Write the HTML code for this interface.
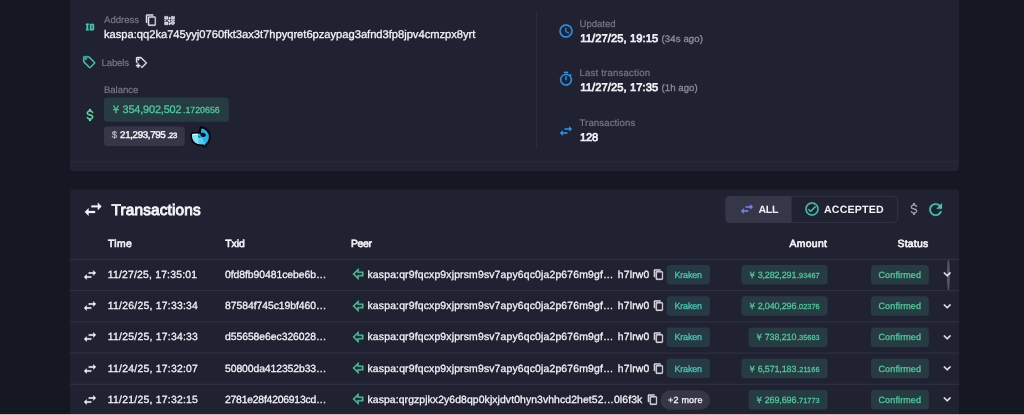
<!DOCTYPE html>
<html lang="en"><head><meta charset="utf-8"><title>Kaspa address</title>
<style>
*{box-sizing:border-box;margin:0;padding:0}
html,body{width:1024px;height:415px;overflow:hidden;background:#151723;font-family:"Liberation Sans",sans-serif;color:#f1f1f6}
div,svg{position:absolute}
svg{overflow:visible}
.t{text-rendering:geometricPrecision;white-space:nowrap;line-height:14px;-webkit-text-stroke:.3px}
#root{left:0;top:0;width:1024px;height:415px;will-change:transform}

</style></head><body>
<div id="root">
<svg style="left:0;top:0" width="1024" height="415" viewBox="0 0 1024 415"><rect x="70.00" y="-10.00" width="889.00" height="181.00" rx="4" fill="#202231"/><path d="M70 161H959V167A4 4 0 0 1 955 171H74A4 4 0 0 1 70 167Z" fill="#222433"/><rect x="70.00" y="160.80" width="889.00" height="1.00" rx="0" fill="#292b3b"/><rect x="70.00" y="189.60" width="889.00" height="240.00" rx="4" fill="#202231"/><rect x="536.00" y="12.00" width="1.00" height="137.00" rx="0" fill="#2a2c3b"/><rect x="104.00" y="97.40" width="124.80" height="24.40" rx="3.5" fill="#273b43"/><rect x="104.00" y="126.40" width="80.80" height="19.50" rx="3.5" fill="#353747"/><rect x="726" y="196.4" width="171.7" height="26" rx="3.5" fill="none" stroke="#323444" stroke-width="1"/><path d="M729.5 195.9H791.6V222.9H729.5A4 4 0 0 1 725.5 218.9V199.9A4 4 0 0 1 729.5 195.9Z" fill="#353748"/><ellipse cx="948.4" cy="274.8" rx="1.5" ry="15.4" fill="rgba(225,225,240,.27)"/><rect x="70.00" y="258.97" width="889.00" height="1.00" rx="0" fill="#323443"/><rect x="666.75" y="265.00" width="43.25" height="19.50" rx="3.5" fill="#263a45"/><rect x="741.50" y="265.00" width="86.10" height="19.60" rx="3.5" fill="#273b43"/><rect x="871.00" y="265.00" width="57.80" height="19.60" rx="3.5" fill="#273b43"/><rect x="70.00" y="290.17" width="889.00" height="1.00" rx="0" fill="#323443"/><rect x="666.75" y="296.20" width="43.25" height="19.50" rx="3.5" fill="#263a45"/><rect x="741.50" y="296.20" width="86.10" height="19.60" rx="3.5" fill="#273b43"/><rect x="871.00" y="296.20" width="57.80" height="19.60" rx="3.5" fill="#273b43"/><rect x="70.00" y="321.37" width="889.00" height="1.00" rx="0" fill="#323443"/><rect x="666.75" y="327.40" width="43.25" height="19.50" rx="3.5" fill="#263a45"/><rect x="748.50" y="327.40" width="79.10" height="19.60" rx="3.5" fill="#273b43"/><rect x="871.00" y="327.40" width="57.80" height="19.60" rx="3.5" fill="#273b43"/><rect x="70.00" y="352.57" width="889.00" height="1.00" rx="0" fill="#323443"/><rect x="666.75" y="358.60" width="43.25" height="19.50" rx="3.5" fill="#263a45"/><rect x="741.50" y="358.60" width="86.10" height="19.60" rx="3.5" fill="#273b43"/><rect x="871.00" y="358.60" width="57.80" height="19.60" rx="3.5" fill="#273b43"/><rect x="70.00" y="383.77" width="889.00" height="1.00" rx="0" fill="#323443"/><rect x="660.50" y="390.30" width="49.50" height="19.50" rx="9.75" fill="#353747"/><rect x="748.50" y="389.80" width="79.10" height="19.60" rx="3.5" fill="#273b43"/><rect x="871.00" y="389.80" width="57.80" height="19.60" rx="3.5" fill="#273b43"/><rect x="0.00" y="414.00" width="1024.00" height="1.00" rx="0" fill="#c9bdbd"/></svg>
<svg style="left:81.90px;top:19.10px" width="16" height="16" viewBox="0 0 24 24"><path fill="#45c6b1" stroke="#45c6b1" stroke-width="0.7" stroke-linejoin="round" d="M10 7V9H9V15H10V17H6V15H7V9H6V7H10M16 7C17.11 7 18 7.9 18 9V15C18 16.11 17.11 17 16 17H12V7M16 9H14V15H16V9Z"/></svg>
<svg style="left:145.35px;top:14.05px" width="12.2" height="12.2" viewBox="0 0 24 24"><path fill="#e4e4ec" stroke="#e4e4ec" stroke-width="0.9" stroke-linejoin="round" d="M19,21H8V7H19M19,5H8A2,2 0 0,0 6,7V21A2,2 0 0,0 8,23H19A2,2 0 0,0 21,21V7A2,2 0 0,0 19,5M16,1H4A2,2 0 0,0 2,3V17H4V3H16V1Z"/></svg>
<svg style="left:162.55px;top:14.6px" width="13.1" height="11.2" viewBox="0 0 24 24" preserveAspectRatio="none"><path fill="#e4e4ec" stroke="#e4e4ec" stroke-width="1.1" d="M3,11H5V13H3V11M11,5H13V9H11V5M9,11H13V15H11V13H9V11M15,11H17V13H19V11H21V13H19V15H21V19H19V21H17V19H13V21H11V17H15V15H17V13H15V11M19,19V15H17V19H19M15,3H21V9H15V3M17,5V7H19V5H17M3,3H9V9H3V3M5,5V7H7V5H5M3,15H9V21H3V15M5,17V19H7V17H5Z"/></svg>
<svg style="left:81.55px;top:55.30px" width="14.4" height="14.4" viewBox="0 0 24 24"><path fill="#45c6b1" stroke="#45c6b1" stroke-width="0.6" stroke-linejoin="round" d="M21.41 11.58L12.41 2.58A2 2 0 0 0 11 2H4A2 2 0 0 0 2 4V11A2 2 0 0 0 2.59 12.42L11.59 21.42A2 2 0 0 0 13 22A2 2 0 0 0 14.41 21.41L21.41 14.41A2 2 0 0 0 22 13A2 2 0 0 0 21.41 11.58M13 20L4 11V4H11L20 13M6.5 5A1.5 1.5 0 1 1 5 6.5A1.5 1.5 0 0 1 6.5 5Z"/></svg>
<svg style="left:135.10px;top:55.85px" width="12.8" height="12.8" viewBox="0 0 24 24"><path fill="#e8e8ee" stroke="#e8e8ee" stroke-width="0.8" stroke-linejoin="round" d="M21.41 11.58L12.41 2.58A2 2 0 0 0 11 2H4A2 2 0 0 0 2 4V11A2 2 0 0 0 2.59 12.42L3 12.82A5.62 5.62 0 0 1 5.08 12.08L4 11V4H11L20 13L13 20L11.92 18.92A5.57 5.57 0 0 1 11.18 21L11.59 21.41A2 2 0 0 0 13 22A2 2 0 0 0 14.41 21.41L21.41 14.41A2 2 0 0 0 22 13A2 2 0 0 0 21.41 11.58M6.5 5A1.5 1.5 0 1 0 8 6.5A1.5 1.5 0 0 0 6.5 5M10 19H7V22H5V19H2V17H5V14H7V17H10Z"/></svg>
<svg style="left:82.10px;top:107.40px" width="16" height="16" viewBox="0 0 24 24"><path fill="#5fd8a0" stroke="#5fd8a0" stroke-width="0.3" stroke-linejoin="round" d="M7,15H9C9,16.08 10.37,17 12,17C13.63,17 15,16.08 15,15C15,13.9 13.96,13.5 11.76,12.97C9.64,12.44 7,11.78 7,9C7,7.21 8.47,5.69 10.5,5.18V3H13.5V5.18C15.53,5.69 17,7.21 17,9H15C15,7.92 13.63,7 12,7C10.37,7 9,7.92 9,9C9,10.1 10.04,10.5 12.24,11.03C14.36,11.56 17,12.22 17,15C17,16.79 15.53,18.31 13.5,18.82V21H10.5V18.82C8.47,18.31 7,16.79 7,15Z"/></svg>
<svg style="left:557.60px;top:22.60px" width="16" height="16" viewBox="0 0 24 24"><path fill="#2b98f0" stroke="#2b98f0" stroke-width="0.3" stroke-linejoin="round" d="M12,20A8,8 0 0,0 20,12A8,8 0 0,0 12,4A8,8 0 0,0 4,12A8,8 0 0,0 12,20M12,2A10,10 0 0,1 22,12A10,10 0 0,1 12,22C6.47,22 2,17.5 2,12A10,10 0 0,1 12,2M12.5,7V12.25L17,14.92L16.25,16.15L11,13V7H12.5Z"/></svg>
<svg style="left:557.75px;top:71.30px" width="16" height="16" viewBox="0 0 24 24"><path fill="#2b98f0" stroke="#2b98f0" stroke-width="0.3" stroke-linejoin="round" d="M12,20A7,7 0 0,1 5,13A7,7 0 0,1 12,6A7,7 0 0,1 19,13A7,7 0 0,1 12,20M19.03,7.39L20.45,5.97C20,5.46 19.55,5 19.04,4.56L17.62,6C16.07,4.74 14.12,4 12,4A9,9 0 0,0 3,13A9,9 0 0,0 12,22C17,22 21,17.97 21,13C21,10.88 20.26,8.93 19.03,7.39M11,14H13V8H11M15,1H9V3H15V1Z"/></svg>
<svg style="left:558.00px;top:122.50px" width="16" height="16" viewBox="0 0 24 24"><path fill="#2b98f0" stroke="#2b98f0" stroke-width="0.3" stroke-linejoin="round" d="M21,9L17,5V8H10V10H17V13M7,11L3,15L7,19V16H14V14H7V11Z"/></svg>
<svg style="left:186px;top:122px" width="30" height="28" viewBox="0 0 30 28">
<path d="M5.3 14C5.2 12.2 5.7 11 7.1 10.9L12.5 10.8L14.1 8.6L14.7 5.3C17.2 5.5 19.4 6.4 21.2 8.2C23.2 10.2 24 12.6 23.9 15C23.8 18.4 22.2 21 19.8 22.9L19.4 24.6L17.5 24.3L16.6 23C13.4 23.3 10.4 22.7 8.2 20.9C6.2 19.1 5.4 16.6 5.3 14Z" fill="#20b4ec" stroke="#04050a" stroke-width="2" stroke-linejoin="round"/>
<path d="M6 13.7C6 12.3 6.4 11.7 7.3 11.7L12.1 11.6L12.1 14.4C12.3 15.8 13.5 16.3 15.1 16.3L16.6 16.3C16.6 18.4 17.2 20.2 18.8 21.5C17.2 22.4 14.1 22.6 11.7 21.8C8.3 20.6 6.1 17.5 6 13.7Z" fill="#82e3fb"/>
<path d="M12.4 17L17 16.8L17.6 20.3L18.9 21.7C16.7 22.6 14.3 22.4 12.4 21.6Z" fill="#4fccf4"/>
<path d="M6.4 12.2L11.5 12L11.6 13L6.3 13.2Z" fill="#e4f8fd"/>
<path d="M12.4 10.6L14.3 7.6L15.2 11C16.8 10.4 19.6 11 19.8 12.9C20 14.9 16.8 15.3 15.4 14.5C14.3 13.8 14.6 12.3 14.1 11.6L12.4 11.4Z" fill="#080a12"/>
<rect x="12.3" y="14.2" width="1.6" height="1.6" fill="#1c6f8e"/>
</svg>
<svg style="left:82.05px;top:198.30px" width="22.4" height="22.4" viewBox="0 0 24 24"><path fill="#f1f1f6" stroke="#f1f1f6" stroke-width="0.3" stroke-linejoin="round" d="M21,9L17,5V8H10V10H17V13M7,11L3,15L7,19V16H14V14H7V11Z"/></svg>
<svg style="left:738.50px;top:201.00px" width="16" height="16" viewBox="0 0 24 24"><path fill="#7b83eb" stroke="#7b83eb" stroke-width="0.3" stroke-linejoin="round" d="M21,9L17,5V8H10V10H17V13M7,11L3,15L7,19V16H14V14H7V11Z"/></svg>
<svg style="left:803.75px;top:200.75px" width="16" height="16" viewBox="0 0 24 24"><path fill="#45c6b1" stroke="#45c6b1" stroke-width="0.3" stroke-linejoin="round" d="M12 2C6.5 2 2 6.5 2 12S6.5 22 12 22 22 17.5 22 12 17.5 2 12 2M12 20C7.59 20 4 16.41 4 12S7.59 4 12 4 20 7.59 20 12 16.41 20 12 20M16.59 7.58L10 14.17L7.41 11.59L6 13L10 17L18 9L16.59 7.58Z"/></svg>
<svg style="left:906.25px;top:201.00px" width="16" height="16" viewBox="0 0 24 24"><path fill="#9a9ca8" stroke="#9a9ca8" stroke-width="0" stroke-linejoin="round" d="M7,15H9C9,16.08 10.37,17 12,17C13.63,17 15,16.08 15,15C15,13.9 13.96,13.5 11.76,12.97C9.64,12.44 7,11.78 7,9C7,7.21 8.47,5.69 10.5,5.18V3H13.5V5.18C15.53,5.69 17,7.21 17,9H15C15,7.92 13.63,7 12,7C10.37,7 9,7.92 9,9C9,10.1 10.04,10.5 12.24,11.03C14.36,11.56 17,12.22 17,15C17,16.79 15.53,18.31 13.5,18.82V21H10.5V18.82C8.47,18.31 7,16.79 7,15Z"/></svg>
<svg style="left:926.40px;top:199.65px" width="19.2" height="19.2" viewBox="0 0 24 24"><path fill="#45c6b1" stroke="#45c6b1" stroke-width="0.3" stroke-linejoin="round" d="M17.65,6.35C16.2,4.9 14.21,4 12,4A8,8 0 0,0 4,12A8,8 0 0,0 12,20C15.73,20 18.84,17.45 19.73,14H17.65C16.83,16.33 14.61,18 12,18A6,6 0 0,1 6,12A6,6 0 0,1 12,6C13.66,6 15.14,6.69 16.22,7.78L13,11H20V4L17.65,6.35Z"/></svg>
<svg style="left:81.75px;top:267.00px" width="16" height="16" viewBox="0 0 24 24"><path fill="#f1f1f6" stroke="#f1f1f6" stroke-width="0.3" stroke-linejoin="round" d="M21,9L17,5V8H10V10H17V13M7,11L3,15L7,19V16H14V14H7V11Z"/></svg>
<svg style="left:350.65px;top:267.30px" width="14" height="14" viewBox="0 0 24 24"><path fill="#4fc79b" stroke="#4fc79b" stroke-width="0.6" stroke-linejoin="round" d="M13,22L3,12L13,2V8H21V16H13V22M6,12L11,17V14H19V10H11V7L6,12Z"/></svg>
<svg style="left:652.75px;top:269.15px" width="11.2" height="11.2" viewBox="0 0 24 24"><path fill="#e8e8ee" stroke="#e8e8ee" stroke-width="0.9" stroke-linejoin="round" d="M19,21H8V7H19M19,5H8A2,2 0 0,0 6,7V21A2,2 0 0,0 8,23H19A2,2 0 0,0 21,21V7A2,2 0 0,0 19,5M16,1H4A2,2 0 0,0 2,3V17H4V3H16V1Z"/></svg>
<svg style="left:939.80px;top:267.40px" width="14.4" height="14.4" viewBox="0 0 24 24"><path fill="#f1f1f6" stroke="#f1f1f6" stroke-width="0.8" stroke-linejoin="round" d="M7.41,8.58L12,13.17L16.59,8.58L18,10L12,16L6,10L7.41,8.58Z"/></svg>
<svg style="left:81.75px;top:298.20px" width="16" height="16" viewBox="0 0 24 24"><path fill="#f1f1f6" stroke="#f1f1f6" stroke-width="0.3" stroke-linejoin="round" d="M21,9L17,5V8H10V10H17V13M7,11L3,15L7,19V16H14V14H7V11Z"/></svg>
<svg style="left:350.65px;top:298.50px" width="14" height="14" viewBox="0 0 24 24"><path fill="#4fc79b" stroke="#4fc79b" stroke-width="0.6" stroke-linejoin="round" d="M13,22L3,12L13,2V8H21V16H13V22M6,12L11,17V14H19V10H11V7L6,12Z"/></svg>
<svg style="left:652.75px;top:300.35px" width="11.2" height="11.2" viewBox="0 0 24 24"><path fill="#e8e8ee" stroke="#e8e8ee" stroke-width="0.9" stroke-linejoin="round" d="M19,21H8V7H19M19,5H8A2,2 0 0,0 6,7V21A2,2 0 0,0 8,23H19A2,2 0 0,0 21,21V7A2,2 0 0,0 19,5M16,1H4A2,2 0 0,0 2,3V17H4V3H16V1Z"/></svg>
<svg style="left:939.80px;top:298.60px" width="14.4" height="14.4" viewBox="0 0 24 24"><path fill="#f1f1f6" stroke="#f1f1f6" stroke-width="0.8" stroke-linejoin="round" d="M7.41,8.58L12,13.17L16.59,8.58L18,10L12,16L6,10L7.41,8.58Z"/></svg>
<svg style="left:81.75px;top:329.40px" width="16" height="16" viewBox="0 0 24 24"><path fill="#f1f1f6" stroke="#f1f1f6" stroke-width="0.3" stroke-linejoin="round" d="M21,9L17,5V8H10V10H17V13M7,11L3,15L7,19V16H14V14H7V11Z"/></svg>
<svg style="left:350.65px;top:329.70px" width="14" height="14" viewBox="0 0 24 24"><path fill="#4fc79b" stroke="#4fc79b" stroke-width="0.6" stroke-linejoin="round" d="M13,22L3,12L13,2V8H21V16H13V22M6,12L11,17V14H19V10H11V7L6,12Z"/></svg>
<svg style="left:652.75px;top:331.55px" width="11.2" height="11.2" viewBox="0 0 24 24"><path fill="#e8e8ee" stroke="#e8e8ee" stroke-width="0.9" stroke-linejoin="round" d="M19,21H8V7H19M19,5H8A2,2 0 0,0 6,7V21A2,2 0 0,0 8,23H19A2,2 0 0,0 21,21V7A2,2 0 0,0 19,5M16,1H4A2,2 0 0,0 2,3V17H4V3H16V1Z"/></svg>
<svg style="left:939.80px;top:329.80px" width="14.4" height="14.4" viewBox="0 0 24 24"><path fill="#f1f1f6" stroke="#f1f1f6" stroke-width="0.8" stroke-linejoin="round" d="M7.41,8.58L12,13.17L16.59,8.58L18,10L12,16L6,10L7.41,8.58Z"/></svg>
<svg style="left:81.75px;top:360.60px" width="16" height="16" viewBox="0 0 24 24"><path fill="#f1f1f6" stroke="#f1f1f6" stroke-width="0.3" stroke-linejoin="round" d="M21,9L17,5V8H10V10H17V13M7,11L3,15L7,19V16H14V14H7V11Z"/></svg>
<svg style="left:350.65px;top:360.90px" width="14" height="14" viewBox="0 0 24 24"><path fill="#4fc79b" stroke="#4fc79b" stroke-width="0.6" stroke-linejoin="round" d="M13,22L3,12L13,2V8H21V16H13V22M6,12L11,17V14H19V10H11V7L6,12Z"/></svg>
<svg style="left:652.75px;top:362.75px" width="11.2" height="11.2" viewBox="0 0 24 24"><path fill="#e8e8ee" stroke="#e8e8ee" stroke-width="0.9" stroke-linejoin="round" d="M19,21H8V7H19M19,5H8A2,2 0 0,0 6,7V21A2,2 0 0,0 8,23H19A2,2 0 0,0 21,21V7A2,2 0 0,0 19,5M16,1H4A2,2 0 0,0 2,3V17H4V3H16V1Z"/></svg>
<svg style="left:939.80px;top:361.00px" width="14.4" height="14.4" viewBox="0 0 24 24"><path fill="#f1f1f6" stroke="#f1f1f6" stroke-width="0.8" stroke-linejoin="round" d="M7.41,8.58L12,13.17L16.59,8.58L18,10L12,16L6,10L7.41,8.58Z"/></svg>
<svg style="left:81.75px;top:391.80px" width="16" height="16" viewBox="0 0 24 24"><path fill="#f1f1f6" stroke="#f1f1f6" stroke-width="0.3" stroke-linejoin="round" d="M21,9L17,5V8H10V10H17V13M7,11L3,15L7,19V16H14V14H7V11Z"/></svg>
<svg style="left:350.65px;top:392.10px" width="14" height="14" viewBox="0 0 24 24"><path fill="#4fc79b" stroke="#4fc79b" stroke-width="0.6" stroke-linejoin="round" d="M13,22L3,12L13,2V8H21V16H13V22M6,12L11,17V14H19V10H11V7L6,12Z"/></svg>
<svg style="left:646.60px;top:393.95px" width="11.2" height="11.2" viewBox="0 0 24 24"><path fill="#e8e8ee" stroke="#e8e8ee" stroke-width="0.9" stroke-linejoin="round" d="M19,21H8V7H19M19,5H8A2,2 0 0,0 6,7V21A2,2 0 0,0 8,23H19A2,2 0 0,0 21,21V7A2,2 0 0,0 19,5M16,1H4A2,2 0 0,0 2,3V17H4V3H16V1Z"/></svg>
<svg style="left:939.80px;top:392.20px" width="14.4" height="14.4" viewBox="0 0 24 24"><path fill="#f1f1f6" stroke="#f1f1f6" stroke-width="0.8" stroke-linejoin="round" d="M7.41,8.58L12,13.17L16.59,8.58L18,10L12,16L6,10L7.41,8.58Z"/></svg>
<div class="t" style="left:104.00px;top:14px;font-size:9.6px;color:#777883;letter-spacing:-0.016px;-webkit-text-stroke:0.2px">Address</div>
<div class="t" style="left:104.00px;top:28px;font-size:11.2px;color:#f1f1f6;letter-spacing:-0.027px">kaspa:qq2ka745yyj0760fkt3ax3t7hpyqret6pzaypag3afnd3fp8jpv4cmzpx8yrt</div>
<div class="t" style="left:101.50px;top:57px;font-size:9.6px;color:#777883;letter-spacing:-0.145px;-webkit-text-stroke:0.2px">Labels</div>
<div class="t" style="left:104.00px;top:84px;font-size:9.6px;color:#777883;letter-spacing:-0.056px;-webkit-text-stroke:0.2px">Balance</div>
<div class="t" style="left:113.00px;top:103px;font-size:10.6px;color:#4fc79b">Ұ</div>
<div class="t" style="left:122.50px;top:103px;font-size:10.9px;color:#4fc79b;letter-spacing:-0.151px">354,902,502</div>
<div class="t" style="left:183.00px;top:103px;font-size:8.8px;color:#4fc79b">.1720656</div>
<div class="t" style="left:111.70px;top:129px;font-size:9.6px;color:#b4b6c2">$</div>
<div class="t" style="left:120.10px;top:129px;font-size:9.8px;color:#f1f1f6;letter-spacing:-0.376px;-webkit-text-stroke:0.45px">21,293,795</div>
<div class="t" style="left:167.20px;top:129px;font-size:7.7px;color:#f1f1f6;letter-spacing:-0.306px;-webkit-text-stroke:0.45px">.23</div>
<div class="t" style="left:579.50px;top:18px;font-size:9.6px;color:#777883;letter-spacing:-0.031px;-webkit-text-stroke:0.2px">Updated</div>
<div class="t" style="left:580.25px;top:32px;font-size:11.2px;color:#f1f1f6;letter-spacing:0.074px;-webkit-text-stroke:0.7px">11/27/25, 19:15</div>
<div class="t" style="left:661.50px;top:33px;font-size:9.6px;color:#8c8e9a;letter-spacing:0.114px">(34s ago)</div>
<div class="t" style="left:579.50px;top:67px;font-size:9.6px;color:#777883;letter-spacing:0.191px;-webkit-text-stroke:0.2px">Last transaction</div>
<div class="t" style="left:580.25px;top:81px;font-size:11.2px;color:#f1f1f6;letter-spacing:0.074px;-webkit-text-stroke:0.7px">11/27/25, 17:35</div>
<div class="t" style="left:661.50px;top:82px;font-size:9.6px;color:#8c8e9a;letter-spacing:0.066px">(1h ago)</div>
<div class="t" style="left:579.50px;top:117px;font-size:9.6px;color:#777883;letter-spacing:0.112px;-webkit-text-stroke:0.2px">Transactions</div>
<div class="t" style="left:580.00px;top:131px;font-size:11.2px;color:#f1f1f6;letter-spacing:-0.222px;-webkit-text-stroke:0.7px">128</div>
<div class="t" style="left:111.50px;top:204px;font-size:15.4px;color:#f4f4f8;letter-spacing:0.151px;-webkit-text-stroke:0.9px">Transactions</div>
<div class="t" style="left:758.50px;top:203px;font-size:10.6px;color:#f1f1f6;font-weight:bold;letter-spacing:-0.311px;-webkit-text-stroke:0px">ALL</div>
<div class="t" style="left:824.00px;top:203px;font-size:10.6px;color:#f1f1f6;font-weight:bold;letter-spacing:0.197px;-webkit-text-stroke:0px">ACCEPTED</div>
<div class="t" style="left:108.00px;top:238px;font-size:10.4px;color:#f1f1f6;letter-spacing:0.358px;-webkit-text-stroke:0.65px">Time</div>
<div class="t" style="left:225.30px;top:238px;font-size:10.4px;color:#f1f1f6;letter-spacing:-0.050px;-webkit-text-stroke:0.65px">Txid</div>
<div class="t" style="left:351.00px;top:238px;font-size:10.4px;color:#f1f1f6;letter-spacing:-0.329px;-webkit-text-stroke:0.65px">Peer</div>
<div class="t" style="left:789.50px;top:238px;font-size:10.4px;color:#f1f1f6;letter-spacing:0.316px;-webkit-text-stroke:0.65px">Amount</div>
<div class="t" style="left:897.50px;top:238px;font-size:10.4px;color:#f1f1f6;letter-spacing:0.248px;-webkit-text-stroke:0.65px">Status</div>
<div class="t" style="left:107.80px;top:269px;font-size:10.4px;color:#f1f1f6;letter-spacing:0.193px">11/27/25, 17:35:01</div>
<div class="t" style="left:225.00px;top:269px;font-size:10.4px;color:#f1f1f6;letter-spacing:-0.051px">0fd8fb90481cebe6b…</div>
<div class="t" style="left:367.50px;top:269px;font-size:10.4px;color:#f1f1f6;letter-spacing:0.171px">kaspa:qr9fqcxp9xjprsm9sv7apy6qc0ja2p676m9gf…</div>
<div class="t" style="left:617.75px;top:269px;font-size:10.4px;color:#f1f1f6;letter-spacing:0.184px">h7lrw0</div>
<div class="t" style="left:674.50px;top:268px;font-size:9.0px;color:#45c6b1;letter-spacing:-0.202px">Kraken</div>
<div class="t" style="left:749.70px;top:268px;font-size:8.8px;color:#4fc79b">Ұ</div>
<div class="t" style="left:757.70px;top:268px;font-size:9.0px;color:#4fc79b;letter-spacing:-0.167px">3,282,291</div>
<div class="t" style="left:797.00px;top:269px;font-size:7.3px;color:#4fc79b;letter-spacing:0.048px">.93467</div>
<div class="t" style="left:878.50px;top:268px;font-size:9.0px;color:#4fc79b;letter-spacing:0.124px">Confirmed</div>
<div class="t" style="left:107.80px;top:300px;font-size:10.4px;color:#f1f1f6;letter-spacing:0.246px">11/26/25, 17:33:34</div>
<div class="t" style="left:225.00px;top:300px;font-size:10.4px;color:#f1f1f6;letter-spacing:-0.051px">87584f745c19bf460…</div>
<div class="t" style="left:367.50px;top:300px;font-size:10.4px;color:#f1f1f6;letter-spacing:0.171px">kaspa:qr9fqcxp9xjprsm9sv7apy6qc0ja2p676m9gf…</div>
<div class="t" style="left:617.75px;top:300px;font-size:10.4px;color:#f1f1f6;letter-spacing:0.184px">h7lrw0</div>
<div class="t" style="left:674.50px;top:299px;font-size:9.0px;color:#45c6b1;letter-spacing:-0.202px">Kraken</div>
<div class="t" style="left:749.70px;top:299px;font-size:8.8px;color:#4fc79b">Ұ</div>
<div class="t" style="left:757.70px;top:299px;font-size:9.0px;color:#4fc79b;letter-spacing:-0.167px">2,040,296</div>
<div class="t" style="left:797.00px;top:300px;font-size:7.3px;color:#4fc79b;letter-spacing:0.048px">.02376</div>
<div class="t" style="left:878.50px;top:299px;font-size:9.0px;color:#4fc79b;letter-spacing:0.124px">Confirmed</div>
<div class="t" style="left:107.80px;top:331px;font-size:10.4px;color:#f1f1f6;letter-spacing:0.246px">11/25/25, 17:34:33</div>
<div class="t" style="left:225.00px;top:331px;font-size:10.4px;color:#f1f1f6;letter-spacing:-0.055px">d55658e6ec326028…</div>
<div class="t" style="left:367.50px;top:331px;font-size:10.4px;color:#f1f1f6;letter-spacing:0.171px">kaspa:qr9fqcxp9xjprsm9sv7apy6qc0ja2p676m9gf…</div>
<div class="t" style="left:617.75px;top:331px;font-size:10.4px;color:#f1f1f6;letter-spacing:0.184px">h7lrw0</div>
<div class="t" style="left:674.50px;top:330px;font-size:9.0px;color:#45c6b1;letter-spacing:-0.202px">Kraken</div>
<div class="t" style="left:756.70px;top:330px;font-size:8.8px;color:#4fc79b">Ұ</div>
<div class="t" style="left:764.70px;top:330px;font-size:9.0px;color:#4fc79b;letter-spacing:-0.138px">738,210</div>
<div class="t" style="left:797.00px;top:331px;font-size:7.3px;color:#4fc79b;letter-spacing:0.048px">.35683</div>
<div class="t" style="left:878.50px;top:330px;font-size:9.0px;color:#4fc79b;letter-spacing:0.124px">Confirmed</div>
<div class="t" style="left:107.80px;top:363px;font-size:10.4px;color:#f1f1f6;letter-spacing:0.246px">11/24/25, 17:32:07</div>
<div class="t" style="left:225.00px;top:363px;font-size:10.4px;color:#f1f1f6;letter-spacing:-0.091px">50800da412352b33…</div>
<div class="t" style="left:367.50px;top:363px;font-size:10.4px;color:#f1f1f6;letter-spacing:0.171px">kaspa:qr9fqcxp9xjprsm9sv7apy6qc0ja2p676m9gf…</div>
<div class="t" style="left:617.75px;top:363px;font-size:10.4px;color:#f1f1f6;letter-spacing:0.184px">h7lrw0</div>
<div class="t" style="left:674.50px;top:362px;font-size:9.0px;color:#45c6b1;letter-spacing:-0.202px">Kraken</div>
<div class="t" style="left:749.70px;top:362px;font-size:8.8px;color:#4fc79b">Ұ</div>
<div class="t" style="left:757.70px;top:362px;font-size:9.0px;color:#4fc79b;letter-spacing:-0.167px">6,571,183</div>
<div class="t" style="left:797.00px;top:363px;font-size:7.3px;color:#4fc79b;letter-spacing:0.156px">.21166</div>
<div class="t" style="left:878.50px;top:362px;font-size:9.0px;color:#4fc79b;letter-spacing:0.124px">Confirmed</div>
<div class="t" style="left:107.80px;top:394px;font-size:10.4px;color:#f1f1f6;letter-spacing:0.246px">11/21/25, 17:32:15</div>
<div class="t" style="left:225.00px;top:394px;font-size:10.4px;color:#f1f1f6;letter-spacing:-0.221px">2781e28f4206913cd…</div>
<div class="t" style="left:367.50px;top:394px;font-size:10.4px;color:#f1f1f6;letter-spacing:0.097px">kaspa:qrgzpjkx2y6d8qp0kjxjdvt0hyn3vhhcd2het52…0l6f3k</div>
<div class="t" style="left:668.00px;top:393px;font-size:9.0px;color:#f1f1f6;letter-spacing:0.206px">+2 more</div>
<div class="t" style="left:756.70px;top:393px;font-size:8.8px;color:#4fc79b">Ұ</div>
<div class="t" style="left:764.70px;top:393px;font-size:9.0px;color:#4fc79b;letter-spacing:-0.138px">269,696</div>
<div class="t" style="left:797.00px;top:394px;font-size:7.3px;color:#4fc79b;letter-spacing:0.048px">.71773</div>
<div class="t" style="left:878.50px;top:393px;font-size:9.0px;color:#4fc79b;letter-spacing:0.124px">Confirmed</div>
</div>
</body></html>
